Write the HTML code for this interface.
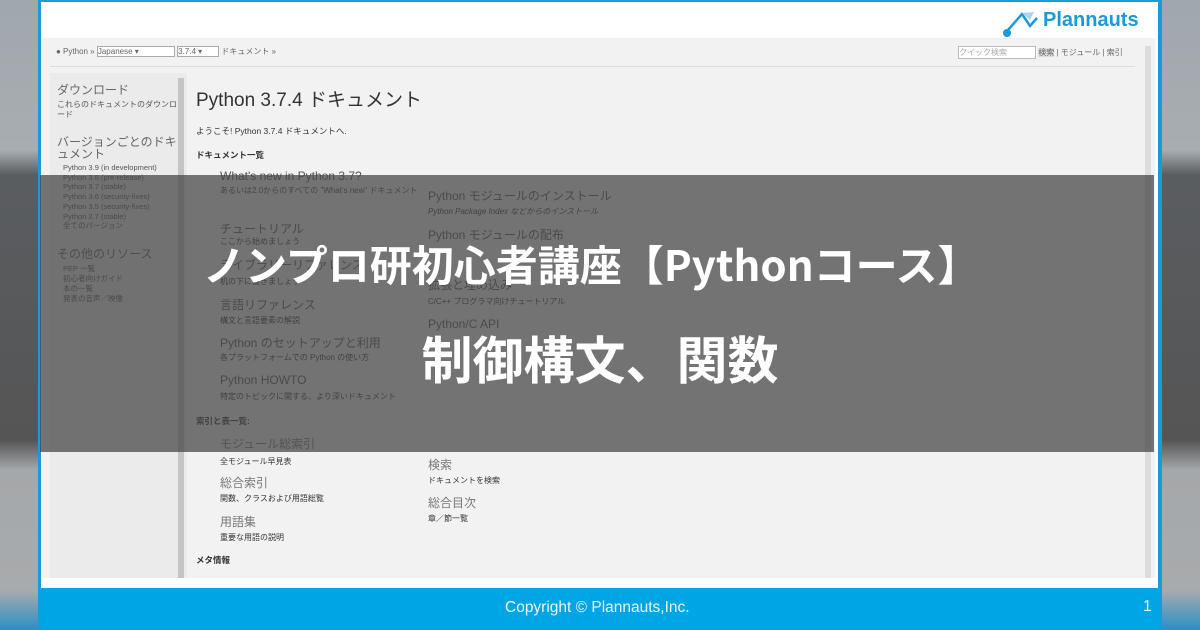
<!DOCTYPE html>
<html><head><meta charset="utf-8"><style>
*{margin:0;padding:0;box-sizing:border-box}
body{width:1200px;height:630px;overflow:hidden;position:relative;font-family:"Liberation Sans","Noto Sans CJK JP",sans-serif;background:#999}
.side{position:absolute;top:0;width:40px;height:630px;background:linear-gradient(#a0a7ad 0px,#a8adb1 150px,#5a5d60 175px,#555 440px,#a5a8aa 470px,#a8abad 590px,#2a8fc4 630px)}
.frame{position:absolute;left:38px;top:0;width:1124px;height:630px;background:#1a9ad6}
.white{position:absolute;left:41px;top:2px;width:1117px;height:586px;background:#fff}
.foot{position:absolute;left:40px;top:588px;width:1120px;height:42px;background:#00a5e6;color:#e8f6fd;font-size:15.5px}
.shot{position:absolute;left:42px;top:38px;width:1113px;height:540px;background:#f2f2f2;color:#333}
.t{position:absolute;white-space:nowrap}
.sb{position:absolute;left:8px;top:35px;width:137px;height:505px;background:#ebebeb}
.sbbar{position:absolute;left:136px;top:40px;width:6px;height:500px;background:#c4c4c4}
.ov{position:absolute;left:40px;top:175px;width:1114px;height:277px;background:rgba(70,70,70,0.74)}
.h{position:absolute;color:#fff;font-weight:bold;font-family:"Noto Sans CJK JP",sans-serif;white-space:nowrap}
</style></head><body>
<div class="side" style="left:0"></div>
<div class="side" style="left:1160px"></div>
<div class="frame"></div>
<div class="white"></div>
<div class="shot">
 <div class="t" style="left:14px;top:8px;font-size:8px;color:#666">● Python » <span style="display:inline-block;width:78px;border:1px solid #aaa;background:#fff">Japanese ▾</span> <span style="display:inline-block;width:42px;border:1px solid #aaa;background:#fff">3.7.4 ▾</span> ドキュメント »</div>
 <div class="t" style="left:916px;top:8px;font-size:8px;color:#666"><span style="display:inline-block;width:78px;border:1px solid #bbb;background:#fff;color:#aaa">クイック検索</span> <span style="background:#ddd">検索</span> | モジュール | 索引</div>
 <div style="position:absolute;left:8px;top:28px;width:1085px;height:1px;background:#ddd"></div>
 <div class="sb"></div><div class="sbbar"></div>
 <div style="position:absolute;left:1103px;top:8px;width:6px;height:532px;background:#ddd"></div>
 <div class="t" style="left:15px;top:43px;font-size:12px;color:#666">ダウンロード</div>
 <div class="t" style="left:15px;top:62px;font-size:8px;line-height:10px;color:#555">これらのドキュメントのダウンロ<br>ード</div>
 <div class="t" style="left:15px;top:98px;font-size:12px;line-height:12px;color:#666">バージョンごとのドキ<br>ュメント</div>
 <div class="t" style="left:21px;top:125px;font-size:7.5px;line-height:9.7px;color:#555">Python 3.9 (in development)<br>Python 3.8 (pre-release)<br>Python 3.7 (stable)<br>Python 3.6 (security-fixes)<br>Python 3.5 (security-fixes)<br>Python 2.7 (stable)<br>全てのバージョン</div>
 <div class="t" style="left:15px;top:207px;font-size:12px;color:#666">その他のリソース</div>
 <div class="t" style="left:21px;top:226px;font-size:7.5px;line-height:10px;color:#555">PEP 一覧<br>初心者向けガイド<br>本の一覧<br>発表の音声／映像</div>
 <div class="t" style="left:154px;top:47px;font-size:19px;color:#333">Python 3.7.4 ドキュメント</div>
 <div class="t" style="left:154px;top:87px;font-size:8.5px">ようこそ! Python 3.7.4 ドキュメントへ.</div>
 <div class="t" style="left:154px;top:111px;font-size:8.5px;font-weight:bold">ドキュメント一覧</div>
 <div class="t" style="left:178px;top:131px;font-size:12px;color:#555">What's new in Python 3.7?</div>
 <div class="t" style="left:178px;top:147px;font-size:8px;color:#444">あるいは2.0からのすべての "What's new" ドキュメント</div>
 <div class="t" style="left:178px;top:182px;font-size:12px;color:#555">チュートリアル</div>
 <div class="t" style="left:178px;top:198px;font-size:8px">ここから始めましょう</div>
 <div class="t" style="left:178px;top:218px;font-size:12px;color:#555">ライブラリーリファレンス</div>
 <div class="t" style="left:178px;top:238px;font-size:8px">机の下に置きましょう</div>
 <div class="t" style="left:178px;top:258px;font-size:12px;color:#555">言語リファレンス</div>
 <div class="t" style="left:178px;top:277px;font-size:8px">構文と言語要素の解説</div>
 <div class="t" style="left:178px;top:296px;font-size:12px;color:#555">Python のセットアップと利用</div>
 <div class="t" style="left:178px;top:314px;font-size:8px">各プラットフォームでの Python の使い方</div>
 <div class="t" style="left:178px;top:335px;font-size:12px;color:#555">Python HOWTO</div>
 <div class="t" style="left:178px;top:353px;font-size:8px">特定のトピックに関する、より深いドキュメント</div>
 <div class="t" style="left:386px;top:149px;font-size:12px;color:#555">Python モジュールのインストール</div>
 <div class="t" style="left:386px;top:168px;font-size:8px;font-style:italic">Python Package Index などからのインストール</div>
 <div class="t" style="left:386px;top:188px;font-size:12px;color:#555">Python モジュールの配布</div>
 <div class="t" style="left:386px;top:238px;font-size:12px;color:#555">拡張と埋め込み</div>
 <div class="t" style="left:386px;top:258px;font-size:8px">C/C++ プログラマ向けチュートリアル</div>
 <div class="t" style="left:386px;top:279px;font-size:12px;color:#555">Python/C API</div>
 <div class="t" style="left:154px;top:377px;font-size:8.5px;font-weight:bold">索引と表一覧:</div>
 <div class="t" style="left:178px;top:397px;font-size:12px;color:#777">モジュール総索引</div>
 <div class="t" style="left:178px;top:418px;font-size:8px">全モジュール早見表</div>
 <div class="t" style="left:178px;top:436px;font-size:12px;color:#777">総合索引</div>
 <div class="t" style="left:178px;top:455px;font-size:8px">関数、クラスおよび用語総覧</div>
 <div class="t" style="left:178px;top:475px;font-size:12px;color:#777">用語集</div>
 <div class="t" style="left:178px;top:494px;font-size:8px">重要な用語の説明</div>
 <div class="t" style="left:154px;top:516px;font-size:8.5px;font-weight:bold">メタ情報</div>
 <div class="t" style="left:386px;top:418px;font-size:12px;color:#777">検索</div>
 <div class="t" style="left:386px;top:437px;font-size:8px">ドキュメントを検索</div>
 <div class="t" style="left:386px;top:456px;font-size:12px;color:#777">総合目次</div>
 <div class="t" style="left:386px;top:475px;font-size:8px">章／節一覧</div>
</div>
<div class="ov"></div>
<div class="h" style="left:203px;top:234px;font-size:42px;line-height:60px">ノンプロ研初心者講座【Pythonコース】</div>
<div class="h" style="left:0;width:1200px;text-align:center;top:325px;font-size:51px;line-height:64px">制御構文、関数</div>
<svg style="position:absolute;left:1000px;top:8px" width="40" height="30" viewBox="0 0 40 30"><circle cx="7" cy="25" r="4" fill="#1a9ad6"/><path d="M8 22 L22 6 L30 18 L37 10" stroke="#1a9ad6" stroke-width="2.5" fill="none"/><path d="M22 5 L34 4 L30 12 Z" fill="#a8d8f0"/></svg>
<div class="t" style="left:1043px;top:9px;font-size:20px;font-weight:bold;color:#1a9ad6">Plannauts</div>
<div class="foot"><div class="t" style="left:465px;top:11px">Copyright © Plannauts,Inc.</div><div class="t" style="left:1103px;top:10px">1</div></div>
</body></html>
